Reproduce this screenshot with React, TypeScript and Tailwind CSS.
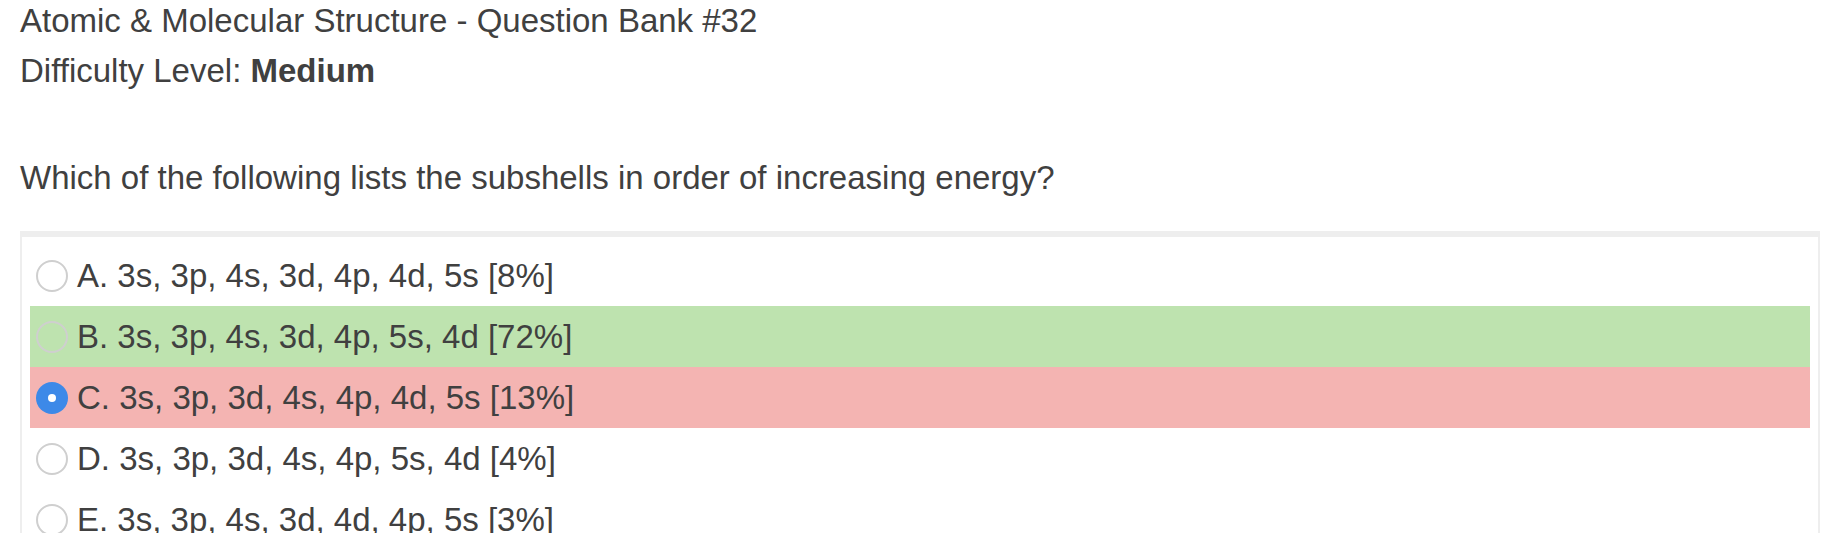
import React from 'react';

type Mark = 'none' | 'correct' | 'wrong';

const options: { key: string; text: string; pct: number; mark: Mark; checked?: boolean }[] = [
  { key: 'A', text: '3s, 3p, 4s, 3d, 4p, 4d, 5s', pct: 8, mark: 'none' },
  { key: 'B', text: '3s, 3p, 4s, 3d, 4p, 5s, 4d', pct: 72, mark: 'correct' },
  { key: 'C', text: '3s, 3p, 3d, 4s, 4p, 4d, 5s', pct: 13, mark: 'wrong', checked: true },
  { key: 'D', text: '3s, 3p, 3d, 4s, 4p, 5s, 4d', pct: 4, mark: 'none' },
  { key: 'E', text: '3s, 3p, 4s, 3d, 4d, 4p, 5s', pct: 3, mark: 'none' },
];

const rowBg: Record<Mark, string> = {
  none: 'bg-transparent',
  correct: 'bg-[#bee3af]',
  wrong: 'bg-[#f4b4b2]',
};

const Radio = ({ checked }: { checked?: boolean }) =>
  checked ? (
    <span className="w-8 h-8 shrink-0 rounded-full bg-[#3d89e8] flex items-center justify-center">
      <span className="w-[8px] h-[8px] rounded-full bg-white" />
    </span>
  ) : (
    <span className="w-8 h-8 shrink-0 rounded-full border-2 border-[#cfcfcf] bg-transparent" />
  );

export default function App() {
  return (
    <div
      className="w-[1824px] h-[533px] overflow-hidden bg-white text-[#404040] text-[33px] pt-[3px] pl-5 pr-1"
      style={{ fontFamily: '"Liberation Sans", Arial, sans-serif' }}
    >
      {/* Header */}
      <div className="leading-[36px]">
        <div>Atomic &amp; Molecular Structure - Question Bank #32</div>
        <div className="mt-[14px]">
          Difficulty Level: <span className="font-semibold">Medium</span>
        </div>
      </div>

      {/* Question */}
      <p className="leading-[36px] mt-[71px]">Which of the following lists the subshells in order of increasing energy?</p>

      {/* Answers */}
      <div className="mt-[35px] border-2 border-t-[6px] border-[#eeeeee] p-2">
        {options.map(o => (
          <div key={o.key} className={`h-[61px] flex items-center pl-[6px] gap-[9px] leading-[36px] ${rowBg[o.mark]}`}>
            <Radio checked={o.checked} />
            <span className="whitespace-nowrap">
              {o.key}. {o.text} [{o.pct}%]
            </span>
          </div>
        ))}
      </div>
    </div>
  );
}
